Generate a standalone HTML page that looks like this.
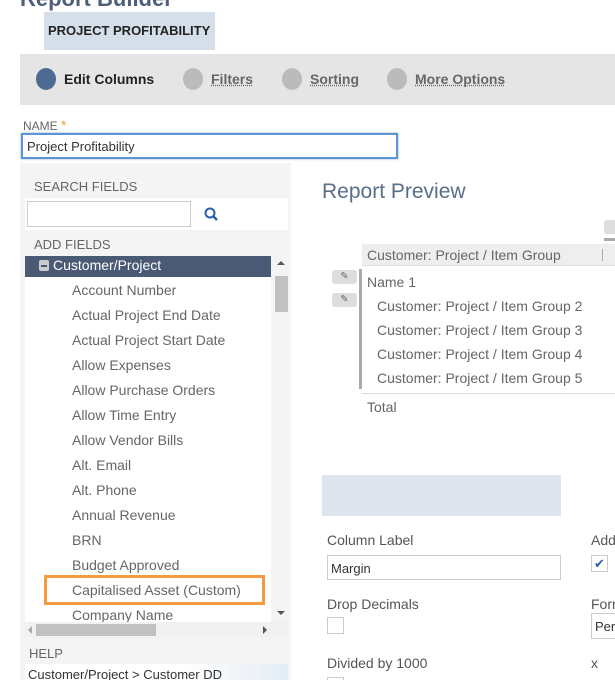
<!DOCTYPE html>
<html style="overflow:hidden;height:680px"><head><meta charset="utf-8"><style>
*{box-sizing:border-box;margin:0;padding:0}
body{width:615px;height:680px;overflow:hidden;background:#fff;font-family:"Liberation Sans",sans-serif;position:relative;color:#555}
.a{position:absolute;white-space:nowrap}
.li{position:absolute;left:72px;font-size:14px;color:#666}
.circ{position:absolute;width:20px;height:22px;border-radius:50%;background:#bbb;top:68px}
.tab{font-size:14px;font-weight:bold;color:#666;text-decoration:underline dotted;top:71px}
.row{position:absolute;left:377px;font-size:14px;color:#666}
</style></head><body>
<div class="a" style="left:20px;top:-14px;font-size:22px;font-weight:bold;color:#4d5f7a">Report Builder</div>
<div class="a" style="left:44px;top:12px;width:171px;height:38px;background:#d5dfe9"></div>
<div class="a" style="left:48px;top:23px;font-size:13px;font-weight:bold;color:#222">PROJECT PROFITABILITY</div>
<div class="a" style="left:20px;top:54px;width:595px;height:51px;background:#e5e5e5"></div>
<div class="circ" style="left:36px;background:#4d6a92"></div>
<div class="a" style="left:64px;top:71px;font-size:14px;font-weight:bold;color:#222">Edit Columns</div>
<div class="circ" style="left:183px"></div><div class="a tab" style="left:211px">Filters</div>
<div class="circ" style="left:282px"></div><div class="a tab" style="left:310px">Sorting</div>
<div class="circ" style="left:387px"></div><div class="a tab" style="left:415px">More Options</div>
<div class="a" style="left:23px;top:117px;font-size:12px;color:#666">NAME <span style="color:#f0a030;font-size:14px">*</span></div>
<div class="a" style="left:21px;top:133px;width:377px;height:26px;border:2px solid #5b95d6;box-shadow:0 0 2px #8ab"></div>
<div class="a" style="left:27px;top:139px;font-size:13px;color:#333">Project Profitability</div>
<div class="a" style="left:20px;top:163px;width:271px;height:517px;background:#f4f4f4"></div>
<div class="a" style="left:34px;top:179px;font-size:13px;color:#666">SEARCH FIELDS</div>
<div class="a" style="left:25px;top:198px;width:263px;height:32px;background:#fff"></div>
<div class="a" style="left:27px;top:201px;width:164px;height:26px;border:1px solid #ccc"></div>
<svg class="a" style="left:204px;top:207px" width="16" height="16"><circle cx="6" cy="6" r="4.5" fill="none" stroke="#2b5ea8" stroke-width="2"/><line x1="9" y1="9" x2="13" y2="13" stroke="#2b5ea8" stroke-width="2.5"/></svg>
<div class="a" style="left:34px;top:237px;font-size:13px;color:#666">ADD FIELDS</div>
<div class="a" style="left:25px;top:256px;width:246px;height:21px;background:#4a5a74"></div>
<div class="a" style="left:39px;top:260px;width:10px;height:11px;background:#ccc;border-radius:2px"></div>
<div class="a" style="left:41px;top:265px;width:6px;height:2px;background:#4a5a74"></div>
<div class="a" style="left:53px;top:257px;font-size:14px;color:#fff">Customer/Project</div>
<div class="a" style="left:25px;top:277px;width:246px;height:345px;background:#fff"></div>
<div class="li" style="top:282px">Account Number</div>
<div class="li" style="top:307px">Actual Project End Date</div>
<div class="li" style="top:332px">Actual Project Start Date</div>
<div class="li" style="top:357px">Allow Expenses</div>
<div class="li" style="top:382px">Allow Purchase Orders</div>
<div class="li" style="top:407px">Allow Time Entry</div>
<div class="li" style="top:432px">Allow Vendor Bills</div>
<div class="li" style="top:457px">Alt. Email</div>
<div class="li" style="top:482px">Alt. Phone</div>
<div class="li" style="top:507px">Annual Revenue</div>
<div class="li" style="top:532px">BRN</div>
<div class="li" style="top:557px">Budget Approved</div>
<div class="li" style="top:582px">Capitalised Asset (Custom)</div>
<div class="li" style="top:607px;height:15px;overflow:hidden">Company Name</div>
<div class="a" style="left:44px;top:575px;width:221px;height:30px;border:3px solid #f59a40"></div>
<div class="a" style="left:273px;top:256px;width:15px;height:366px;background:#f4f4f4"></div>
<div class="a" style="left:275px;top:276px;width:13px;height:36px;background:#c1c1c1"></div>
<div class="a" style="left:277px;top:261px;border:4px solid transparent;border-bottom:4px solid #555;border-top:0"></div>
<div class="a" style="left:277px;top:611px;border:4px solid transparent;border-top:4px solid #555;border-bottom:0"></div>
<div class="a" style="left:25px;top:622px;width:263px;height:16px;background:#f1f1f1"></div>
<div class="a" style="left:36px;top:624px;width:120px;height:12px;background:#c1c1c1"></div>
<div class="a" style="left:28px;top:626px;border:4px solid transparent;border-right:4px solid #aaa;border-left:0"></div>
<div class="a" style="left:263px;top:626px;border:4px solid transparent;border-left:4px solid #555;border-right:0"></div>
<div class="a" style="left:29px;top:646px;font-size:13px;color:#666">HELP</div>
<div class="a" style="left:25px;top:664px;width:263px;height:16px;background:linear-gradient(90deg,#fff 60%,#e3ecf5)"></div>
<div class="a" style="left:28px;top:667px;font-size:13px;color:#333">Customer/Project &gt; Customer DD</div>
<div class="a" style="left:322px;top:180px;font-size:21px;color:#5a6e8a">Report Preview</div>
<div class="a" style="left:604px;top:220px;width:11px;height:14px;background:#ddd;border-radius:3px 0 0 3px"></div>
<div class="a" style="left:604px;top:238px;width:11px;height:3px;background:#aaa"></div>
<div class="a" style="left:362px;top:244px;width:253px;height:22px;background:#eee;border-bottom:1px solid #ddd"></div>
<div class="a" style="left:367px;top:247px;font-size:14px;color:#666">Customer: Project / Item Group</div>
<div class="a" style="left:602px;top:249px;width:1px;height:12px;background:#aaa"></div>
<div class="a" style="left:332px;top:270px;width:25px;height:14px;background:#ddd;border-radius:3px;font-size:10px;color:#666;text-align:center;line-height:14px">✎</div>
<div class="a" style="left:332px;top:293px;width:25px;height:14px;background:#ddd;border-radius:3px;font-size:10px;color:#666;text-align:center;line-height:14px">✎</div>
<div class="a" style="left:359px;top:269px;width:3px;height:120px;background:#aaa"></div>
<div class="a" style="left:367px;top:274px;font-size:14px;color:#666">Name 1</div>
<div class="row" style="top:298px">Customer: Project / Item Group 2</div>
<div class="row" style="top:322px">Customer: Project / Item Group 3</div>
<div class="row" style="top:346px">Customer: Project / Item Group 4</div>
<div class="row" style="top:370px">Customer: Project / Item Group 5</div>
<div class="a" style="left:362px;top:393px;width:253px;height:1px;background:#ddd"></div>
<div class="a" style="left:367px;top:399px;font-size:14px;color:#666">Total</div>
<div class="a" style="left:322px;top:475px;width:239px;height:41px;background:#dfe5ee"></div>
<div class="a" style="left:327px;top:532px;font-size:14px;color:#555">Column Label</div>
<div class="a" style="left:327px;top:555px;width:234px;height:25px;border:1px solid #ccc"></div>
<div class="a" style="left:331px;top:561px;font-size:13px;color:#333">Margin</div>
<div class="a" style="left:327px;top:596px;font-size:14px;color:#555">Drop Decimals</div>
<div class="a" style="left:327px;top:617px;width:17px;height:17px;border:1px solid #ccc"></div>
<div class="a" style="left:327px;top:655px;font-size:14px;color:#555">Divided by 1000</div>
<div class="a" style="left:327px;top:677px;width:17px;height:3px;border:1px solid #ccc;border-bottom:0"></div>
<div class="a" style="left:591px;top:532px;font-size:14px;color:#555">Add</div>
<div class="a" style="left:591px;top:555px;width:17px;height:17px;border:1px solid #ccc;color:#2b5ea8;font-size:13px;line-height:15px;text-align:center">✔</div>
<div class="a" style="left:591px;top:596px;font-size:14px;color:#555">Form</div>
<div class="a" style="left:591px;top:613px;width:30px;height:26px;border:1px solid #ccc"></div>
<div class="a" style="left:595px;top:619px;font-size:13px;color:#333">Per</div>
<div class="a" style="left:591px;top:655px;font-size:14px;color:#555">x</div>
</body></html>
